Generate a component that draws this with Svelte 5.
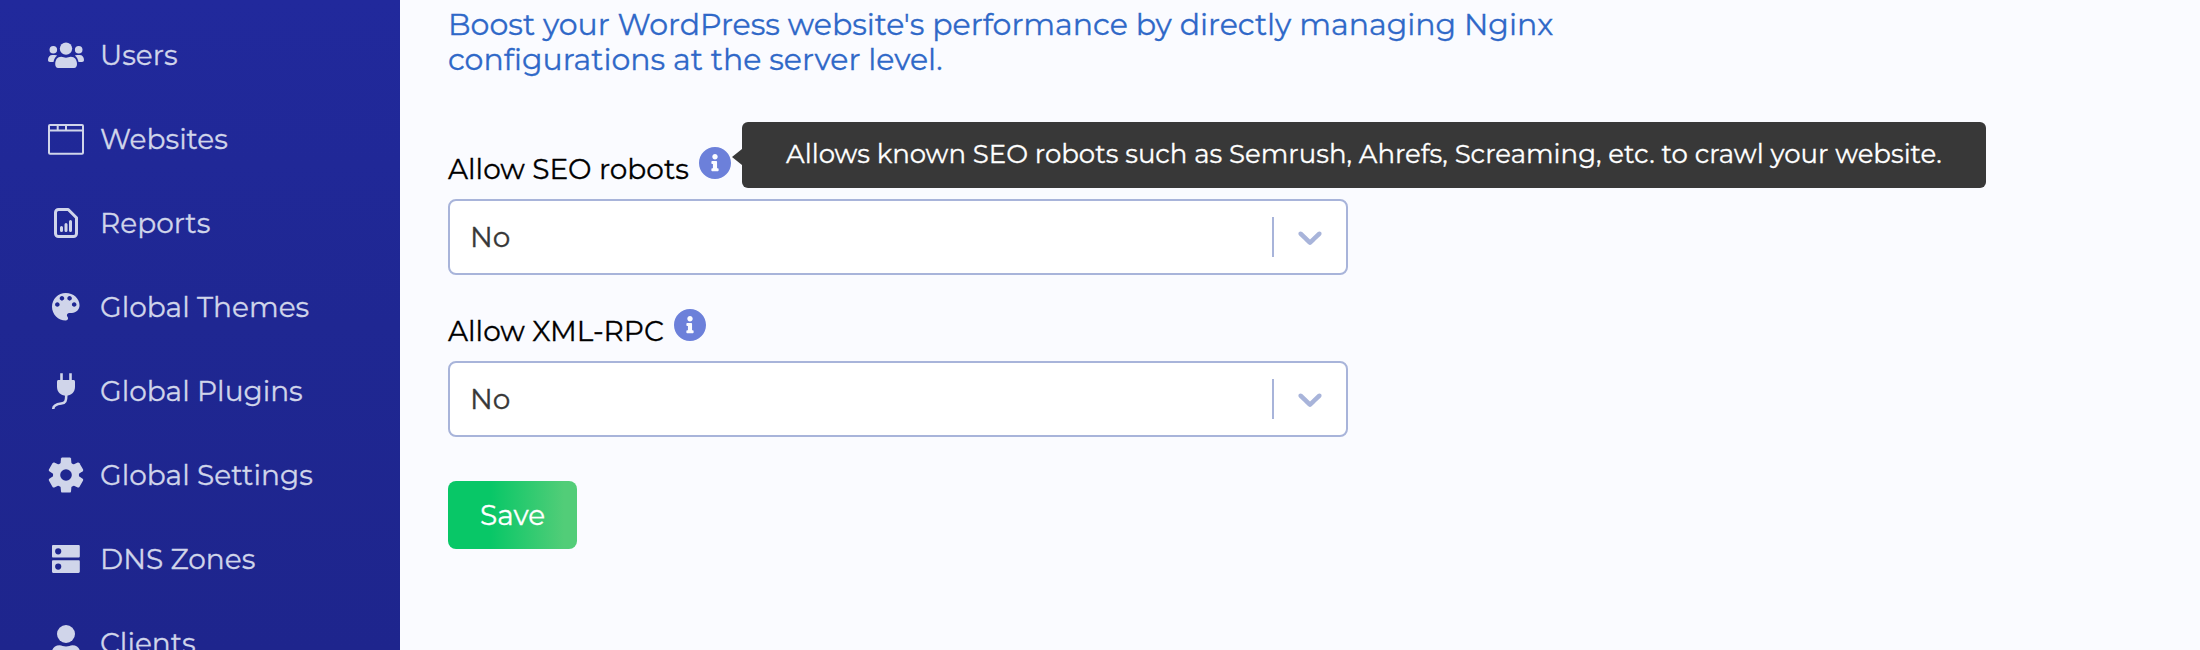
<script>
  const nav = [
    { label: 'Users', icon: 'users' },
    { label: 'Websites', icon: 'websites' },
    { label: 'Reports', icon: 'reports' },
    { label: 'Global Themes', icon: 'palette' },
    { label: 'Global Plugins', icon: 'plug' },
    { label: 'Global Settings', icon: 'gear' },
    { label: 'DNS Zones', icon: 'dns' },
    { label: 'Clients', icon: 'client' }
  ];

  const fields = [
    {
      label: 'Allow SEO robots',
      value: 'No',
      tip: 'Allows known SEO robots such as Semrush, Ahrefs, Screaming, etc. to crawl your website.'
    },
    { label: 'Allow XML-RPC', value: 'No', tip: '' }
  ];
</script>

<div class="page">
  <aside class="sidebar">
    <nav>
      {#each nav as item}
        <a class="item" href="#{item.icon}">
          <svg class="icon" viewBox="0 0 36 36" aria-hidden="true">
            {#if item.icon === 'users'}
              <circle cx="18" cy="11.6" r="6.2" />
              <circle cx="5.3" cy="12.7" r="3.8" />
              <circle cx="30.7" cy="12.7" r="3.8" />
              <path d="M13.2 19.8c1.6 0 3.2.9 4.8.9s3.2-.9 4.8-.9c4 0 6.2 3.2 6.2 7.2 0 2.400-.9 3.900-3 3.900H10.200c-2.100 0-3-1.500-3-3.900 0-4 2-7.200 6-7.200z" />
              <path d="M4.400 18h2.400c.9 0 1.700.2 2.400.6-2 1.500-3.200 3.600-3.700 6.500H2C.7 25.100 0 24.400 0 23.100 0 20.100 1.600 18 4.400 18zM31.600 18h-2.400c-.9 0-1.700.2-2.400.6 2 1.500 3.200 3.600 3.700 6.500H34c1.300 0 2-.7 2-2 0-3-1.600-5.100-4.400-5.100z" />
            {:else if item.icon === 'websites'}
              <g class="line thin">
                <rect x="1" y="4" width="34" height="28.7" rx="1" />
                <path d="M1 9.6h34M9.7 4v5.6M18 4v5.6" />
              </g>
            {:else if item.icon === 'reports'}
              <g class="line">
                <path d="M20.2 4.5H10.5a3 3 0 0 0-3 3v21a3 3 0 0 0 3 3h15a3 3 0 0 0 3-3V12.800z" />
                <path d="M13.5 22.5v3M18 19.5v6M22.5 16.5v9" />
              </g>
            {:else if item.icon === 'palette'}
              <path
                transform="translate(4 4) scale(1.53) translate(-3 -3)"
                d="M12 3c-4.970 0-9 4.030-9 9s4.030 9 9 9c.83 0 1.500-.67 1.500-1.500 0-.39-.15-.74-.39-1.010-.23-.26-.38-.61-.38-.99 0-.83.67-1.500 1.500-1.500H16c2.760 0 5-2.240 5-5 0-4.420-4.030-8-9-8zm-5.500 9c-.83 0-1.500-.67-1.500-1.500S5.670 9 6.500 9 8 9.670 8 10.500 7.330 12 6.500 12zm3-4C8.670 8 8 7.330 8 6.500S8.670 5 9.500 5s1.500.67 1.500 1.500S10.330 8 9.500 8zm5 0c-.83 0-1.500-.67-1.500-1.500S13.670 5 14.500 5s1.500.67 1.500 1.500S15.330 8 14.500 8zm3 4c-.83 0-1.500-.67-1.500-1.500S16.670 9 17.500 9s1.500.67 1.500 1.500-.67 1.500-1.500 1.500z"
              />
            {:else if item.icon === 'plug'}
              <path d="M10.5 7h15c.9 0 1.500.6 1.500 1.500v5.500c0 5-3.800 8.700-9 8.700S9 19 9 14V8.500C9 7.600 9.600 7 10.500 7z" />
              <path class="cable" d="M13.5 8V.3M22.5 8V.3M18.2 22c.2 6-.8 8-5 8.500-5 .5-7.800 1.500-8 5.500" />
            {:else if item.icon === 'gear'}
              <mask id="hub">
                <rect width="36" height="36" fill="#fff" />
                <circle cx="18" cy="18" r="5.8" fill="#000" />
              </mask>
              <g mask="url(#hub)">
                <circle cx="18" cy="18" r="13" />
                {#each [0, 60, 120] as angle}
                  <path
                    transform="rotate({angle} 18 18)"
                    d="M14.600.4h6.800c.9 0 1.400.4 1.600 1.200L23.600 8v20l-.6 6.400c-.2.800-.7 1.200-1.600 1.200h-6.800c-.9 0-1.400-.4-1.600-1.200L12.400 28V8l.6-6.400C13.200.8 13.700.4 14.600.4z"
                  />
                {/each}
              </g>
            {:else if item.icon === 'dns'}
              <path
                fill-rule="evenodd"
                d="M5.200 4h25.300c.8 0 1.300.5 1.300 1.300v10c0 .8-.5 1.300-1.300 1.300H5.200c-.8 0-1.200-.5-1.200-1.300v-10C4 4.500 4.400 4 5.200 4zm5 3.200a3.100 3.100 0 1 0 0 6.200 3.100 3.100 0 0 0 0-6.200zM5.200 19.300h25.300c.8 0 1.300.5 1.300 1.300v10c0 .8-.5 1.300-1.300 1.300H5.200c-.8 0-1.200-.5-1.200-1.300v-10c0-.8.4-1.300 1.200-1.300zm5 3.200a3.100 3.100 0 1 0 0 6.200 3.100 3.100 0 0 0 0-6.200z"
              />
            {:else}
              <circle cx="18" cy="9" r="9" />
              <path d="M11.5 20.200c2.400 0 3.800 1.300 6.500 1.300s4.100-1.300 6.500-1.300c5 0 8 3.800 8 9V36h-29v-6.800c0-5.200 3-9 8-9z" />
            {/if}
          </svg>
          <span>{item.label}</span>
        </a>
      {/each}
    </nav>
  </aside>

  <main>
    <p class="intro">
      Boost your WordPress website's performance by directly managing Nginx<br />
      configurations at the server level.
    </p>

    {#each fields as field}
      <div class="field">
        <div class="label-row">
          <span class="label">{field.label}</span>
          <span class="info">
            <svg viewBox="8 8 496 496" aria-hidden="true">
              <path
                d="M256 8C119.043 8 8 119.083 8 256c0 136.997 111.043 248 248 248s248-111.003 248-248C504 119.083 392.957 8 256 8zm0 110c23.196 0 42 18.804 42 42s-18.804 42-42 42-42-18.804-42-42 18.804-42 42-42zm56 254c0 6.627-5.373 12-12 12h-88c-6.627 0-12-5.373-12-12v-24c0-6.627 5.373-12 12-12h12v-64h-12c-6.627 0-12-5.373-12-12v-24c0-6.627 5.373-12 12-12h64c6.627 0 12 5.373 12 12v100h12c6.627 0 12 5.373 12 12v24z"
              />
            </svg>
            {#if field.tip}
              <span class="tooltip" role="tooltip">{field.tip}</span>
            {/if}
          </span>
        </div>
        <div class="select">
          <span class="value">{field.value}</span>
          <span class="separator"></span>
          <svg class="chevron" viewBox="0 0 20 20" aria-hidden="true">
            <path
              d="M4.516 7.548c0.436-0.446 1.043-0.481 1.576 0l3.908 3.747 3.908-3.747c0.533-0.481 1.141-0.446 1.574 0 0.436 0.445 0.408 1.197 0 1.615-0.406 0.418-4.695 4.502-4.695 4.502-0.217 0.223-0.502 0.335-0.787 0.335s-0.570-0.112-0.789-0.335c0 0-4.287-4.084-4.695-4.502s-0.436-1.170 0-1.615z"
            />
          </svg>
        </div>
      </div>
    {/each}

    <button class="save" type="button">Save</button>
  </main>
</div>

<style>
  :global(body) {
    margin: 0;
    overflow: hidden;
  }

  .page {
    display: flex;
    width: 2200px;
    height: 650px;
    overflow: hidden;
    background: #fafbff;
    font-family: Montserrat, Inter, sans-serif;
    font-size: 28px;
    line-height: 34px;
    -webkit-text-stroke: 0.3px currentColor;
  }

  .sidebar {
    flex: none;
    width: 400px;
    height: 650px;
    overflow: hidden;
    background: linear-gradient(180deg, #21299c 0%, #1f2792 50%, #1e258d 100%);
  }

  nav {
    display: flex;
    flex-direction: column;
    padding-top: 13px;
  }

  .item {
    display: flex;
    align-items: center;
    flex: none;
    gap: 16px;
    height: 84px;
    padding-left: 48px;
    color: #d0d5ea;
    text-decoration: none;
    white-space: nowrap;
  }

  .icon {
    flex: none;
    width: 36px;
    height: 36px;
    fill: #d0d5ea;
  }

  .line,
  .cable {
    fill: none;
    stroke: #d0d5ea;
    stroke-width: 3;
    stroke-linecap: round;
    stroke-linejoin: round;
  }

  .thin {
    stroke-width: 2;
    stroke-linecap: butt;
  }

  .cable {
    stroke-width: 2.6;
    stroke-linecap: butt;
  }

  main {
    flex: 1;
    display: flex;
    flex-direction: column;
    align-items: flex-start;
    padding: 7px 0 0 48px;
  }

  .intro {
    margin: 0 0 70px;
    color: #2f68c8;
    font-size: 30px;
    line-height: 35px;
    white-space: nowrap;
  }

  .field {
    width: 900px;
    margin-bottom: 34px;
  }

  .label-row {
    display: flex;
    align-items: flex-start;
    gap: 10.5px;
    height: 52px;
  }

  .label {
    padding-top: 5px;
    color: #000;
    white-space: nowrap;
  }

  .info {
    position: relative;
    flex: none;
    width: 32px;
    height: 32px;
  }

  .info svg {
    display: block;
    width: 32px;
    height: 32px;
    fill: #6c80da;
  }

  .tooltip {
    position: absolute;
    top: -25px;
    left: 42.6px;
    z-index: 1;
    box-sizing: border-box;
    width: 1244px;
    height: 66px;
    padding-left: 44px;
    border-radius: 6px;
    background: #383838;
    color: #fff;
    font-size: 26px;
    line-height: 64px;
    white-space: nowrap;
  }

  .tooltip::before {
    content: '';
    position: absolute;
    top: 27px;
    left: -10px;
    border: solid transparent;
    border-width: 8px 10px 8px 0;
    border-right-color: #383838;
  }

  .select {
    display: flex;
    align-items: center;
    box-sizing: border-box;
    height: 76px;
    padding: 0 16px 0 20px;
    border: 2px solid #a8b4da;
    border-radius: 8px;
    background: #fff;
  }

  .value {
    flex: 1;
    color: #383838;
  }

  .separator {
    width: 2px;
    height: 40px;
    background: #a8b4da;
  }

  .chevron {
    width: 40px;
    height: 40px;
    margin-left: 16px;
    fill: #a8b4da;
  }

  .save {
    width: 129px;
    height: 68px;
    margin-top: 10px;
    padding: 0 0 0 32px;
    border: 0;
    border-radius: 8px;
    background: linear-gradient(90deg, #08c767 33%, #52cd78 90%);
    color: #fff;
    font: inherit;
    text-align: left;
    -webkit-text-stroke: inherit;
  }
</style>
